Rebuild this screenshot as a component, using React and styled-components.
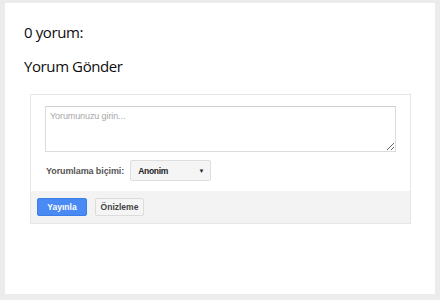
import React from 'react'
import styled, { createGlobalStyle } from 'styled-components'

const GlobalStyle = createGlobalStyle`
  html, body {
    margin: 0;
    padding: 0;
    background: #ececec;
  }
  body {
    font-family: "Open Sans", "Liberation Sans", Arial, sans-serif;
  }
`

const Page = styled.div`
  box-sizing: border-box;
  margin: 3px 5px 0 5px;
  width: 430px;
  height: 291px;
  background: #fff;
  padding: 18px 19px;
`

const Heading = styled.h3`
  margin: 0 0 12px;
  font-family: "Open Sans", sans-serif;
  font-weight: 500;
  font-size: 15px;
  letter-spacing: -0.4px;
  line-height: 22px;
  color: #0d0d0d;
`

const FormBox = styled.div`
  box-sizing: border-box;
  margin: 17px 0 0 6px;
  width: 381px;
  border: 1px solid #e6e6e6;
  font-family: "Liberation Sans", Arial, sans-serif;
`

const FormBody = styled.div`
  padding: 11px 14px 10px;
`

const CommentInput = styled.textarea`
  display: block;
  box-sizing: border-box;
  width: 351px;
  height: 46px;
  margin: 0;
  padding: 4px 4px;
  border: 1px solid #dcdcdc;
  border-top-color: #d0d0d0;
  font-family: "Liberation Sans", Arial, sans-serif;
  font-size: 9px;
  letter-spacing: -0.1px;
  color: #333;
  resize: both;
  outline: none;
  &::placeholder {
    color: #a8a8a8;
  }
`

const FieldRow = styled.div`
  display: flex;
  align-items: center;
  gap: 6px;
  margin-top: 8px;
  padding-left: 1px;
`

const FieldLabel = styled.label`
  font-size: 9px;
  font-weight: bold;
  letter-spacing: -0.1px;
  color: #555;
`

const SelectBox = styled.div`
  box-sizing: border-box;
  display: flex;
  align-items: center;
  justify-content: space-between;
  width: 81px;
  height: 21px;
  padding: 0 6px 0 7px;
  background: #f5f5f5;
  border: 1px solid #dedede;
  border-radius: 2px;
  font-size: 8.5px;
  font-weight: bold;
  letter-spacing: -0.3px;
  color: #222;
`

const Caret = styled.span`
  font-size: 6px;
  color: #222;
`

const Footer = styled.div`
  display: flex;
  gap: 8px;
  padding: 7px 6px;
  background: #f3f3f3;
`

const Button = styled.button`
  box-sizing: border-box;
  height: 18px;
  width: ${p => p.width}px;
  padding: 0;
  border-radius: 2px;
  font-family: "Liberation Sans", Arial, sans-serif;
  font-size: 8.5px;
  font-weight: bold;
  border: 1px solid ${p => (p.primary ? '#3b7ee8' : '#dcdcdc')};
  background: ${p => (p.primary ? '#4a8af4' : '#f5f5f5')};
  color: ${p => (p.primary ? '#fff' : '#444')};
`

export default function App () {
  return (
    <>
      <GlobalStyle />
      <Page>
        <Heading>0 yorum:</Heading>
        <Heading>Yorum Gönder</Heading>
        <FormBox>
          <FormBody>
            <CommentInput placeholder='Yorumunuzu girin...' />
            <FieldRow>
              <FieldLabel>Yorumlama biçimi:</FieldLabel>
              <SelectBox>
                <span>Anonim</span>
                <Caret>▼</Caret>
              </SelectBox>
            </FieldRow>
          </FormBody>
          <Footer>
            <Button primary width={50}>Yayınla</Button>
            <Button width={49}>Önizleme</Button>
          </Footer>
        </FormBox>
      </Page>
    </>
  )
}
